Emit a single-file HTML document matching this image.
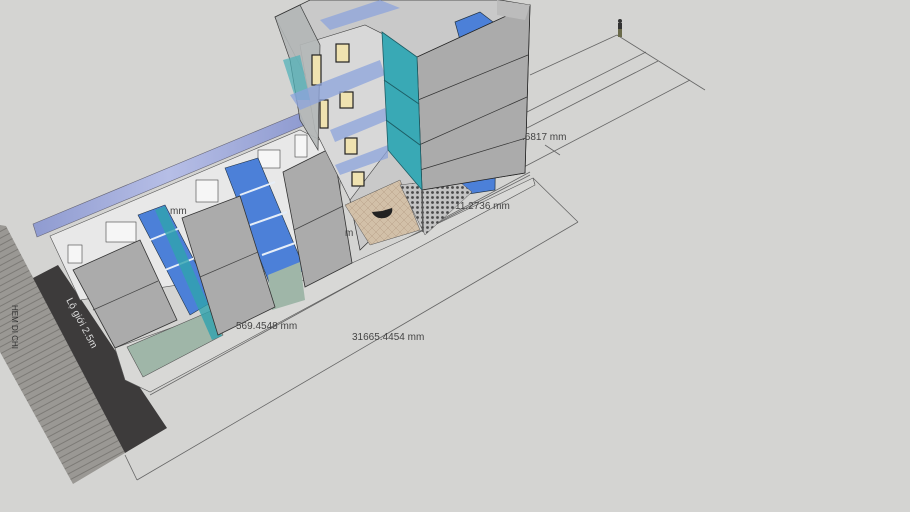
<!DOCTYPE html>
<html><head><meta charset="utf-8"><style>
html,body{margin:0;padding:0;width:910px;height:512px;overflow:hidden;background:#d4d4d2;}
svg{display:block}
text{font-family:"Liberation Sans",sans-serif;font-size:10px;fill:#444}
</style></head><body>
<svg width="910" height="512" viewBox="0 0 910 512" xmlns="http://www.w3.org/2000/svg">
<defs>
<pattern id="wood" width="6" height="6" patternUnits="userSpaceOnUse" patternTransform="rotate(62)">
<rect width="6" height="6" fill="#9a9894"/><line x1="0" y1="0" x2="0" y2="6" stroke="#7c7a76" stroke-width="2"/>
</pattern>
<pattern id="tile" width="8" height="8" patternUnits="userSpaceOnUse">
<rect width="8" height="8" fill="#d2c0a8"/><path d="M0 0L8 8M8 0L0 8" stroke="#b8a088" stroke-width="0.5"/>
</pattern>
<pattern id="dark" width="5" height="5" patternUnits="userSpaceOnUse">
<rect width="5" height="5" fill="#c4c4c4"/><circle cx="2.5" cy="2.5" r="1.4" fill="#4a4a4a"/>
</pattern>
<linearGradient id="sky" x1="0" y1="0" x2="1" y2="0">
<stop offset="0" stop-color="#8f9bd0"/><stop offset="0.5" stop-color="#b6bee6"/><stop offset="1" stop-color="#8f9bd0"/>
</linearGradient>
</defs>

<!-- ground lines -->
<g stroke="#666" stroke-width="0.8" fill="none">
<line x1="137" y1="480" x2="578" y2="222"/>
<line x1="578" y1="222" x2="533" y2="178"/>
<line x1="137" y1="480" x2="125" y2="455"/>
<line x1="150" y1="395" x2="535" y2="183"/>
<line x1="143" y1="380" x2="530" y2="172"/>
<line x1="530" y1="75" x2="617" y2="35"/>
<line x1="527" y1="112" x2="646" y2="52"/>
<line x1="527" y1="128" x2="658" y2="61"/>
<line x1="522" y1="168" x2="690" y2="80"/>
<line x1="617" y1="35" x2="705" y2="90"/>
<line x1="545" y1="145" x2="560" y2="155"/>
<line x1="420" y1="232" x2="530" y2="175"/>
</g>

<!-- wood strip -->
<polygon points="0,225 6,226 125,453 73,484 0,352" fill="url(#wood)"/>
<!-- road -->
<polygon points="33,278 58,265 167,428 125,453" fill="#3d3b3b"/>
<text transform="translate(66,300) rotate(62)" style="fill:#ddd;font-size:10px">Lộ giới 2.5m</text>
<text transform="translate(12,305) rotate(90)" style="fill:#333;font-size:8px">HEM DI CHI</text>

<!-- platform -->
<polygon points="115,348 352,263 420,232 533,178 535,185 150,392 125,380" fill="#d8d8d6" stroke="#555" stroke-width="0.6"/>

<!-- roof strip -->
<polygon points="33,224 300,113 305,125 37,237" fill="url(#sky)" stroke="#667" stroke-width="0.6"/>
<!-- back white walls low block -->
<polygon points="50,236 300,130 340,150 340,260 80,300" fill="#e8e8e8" stroke="#555" stroke-width="0.6"/>
<g fill="#f6f6f6" stroke="#444" stroke-width="0.6">
<rect x="106" y="222" width="30" height="20"/><rect x="196" y="180" width="22" height="22"/><rect x="258" y="150" width="22" height="18"/><rect x="295" y="135" width="12" height="22"/><rect x="68" y="245" width="14" height="18"/>
</g>
<!-- green lower -->
<polygon points="127,347 213,310 223,335 143,377" fill="#9fb6a8" stroke="#555" stroke-width="0.6"/>

<!-- blue stairs -->
<polygon points="138,215 165,205 215,300 190,315" fill="#4c80d8" stroke="#234" stroke-width="0.6"/>
<polygon points="225,168 258,158 305,270 270,285" fill="#4c80d8" stroke="#234" stroke-width="0.6"/>
<g stroke="#e6eef8" stroke-width="2">
<line x1="150" y1="240" x2="180" y2="228"/><line x1="165" y1="270" x2="195" y2="258"/>
<line x1="240" y1="195" x2="275" y2="182"/><line x1="250" y1="225" x2="287" y2="212"/><line x1="262" y1="255" x2="298" y2="242"/>
</g>
<polygon points="155,210 165,206 222,336 212,340" fill="#2fa3ae" opacity="0.8"/>
<polygon points="268,275 300,262 305,300 272,310" fill="#9fb6a8"/>

<!-- gray boxes low block -->
<g fill="#ababab" stroke="#333" stroke-width="0.8">
<polygon points="73,270 140,240 177,320 115,348"/>
<polygon points="182,218 240,196 275,307 218,335"/>
<polygon points="283,172 333,147 352,263 305,287"/>
</g>
<g stroke="#444" stroke-width="0.7">
<line x1="93" y1="310" x2="158" y2="281"/><line x1="200" y1="277" x2="258" y2="252"/><line x1="294" y1="230" x2="343" y2="206"/>
</g>

<!-- tall building back -->
<polygon points="275,17 310,0 500,0 530,5 525,173 422,190 360,250 340,150 318,100" fill="#c9c9c9" stroke="#333" stroke-width="0.7"/>
<!-- inner wall w windows -->
<polygon points="300,45 365,25 385,35 388,150 350,200 315,130" fill="#d8d8d8" stroke="#444" stroke-width="0.6"/>
<!-- tall left box -->
<polygon points="275,17 300,5 320,45 318,150 300,120 290,60" fill="#b3b7b7" stroke="#333" stroke-width="0.7" opacity="0.9"/>
<polygon points="283,60 300,55 310,100 296,100" fill="#4cb0b8" opacity="0.7"/>
<g fill="#efe2b0" stroke="#222" stroke-width="1.2">
<rect x="312" y="55" width="9" height="30"/><rect x="336" y="44" width="13" height="18"/>
<rect x="320" y="100" width="8" height="28"/><rect x="340" y="92" width="13" height="16"/>
<rect x="345" y="138" width="12" height="16"/><rect x="352" y="172" width="12" height="14"/>
</g>
<g fill="#8da4dc" opacity="0.75">
<polygon points="290,95 380,60 385,75 300,110"/>
<polygon points="330,130 385,108 388,120 335,142"/>
<polygon points="335,165 388,145 388,158 340,175"/>
<polygon points="320,20 380,0 400,8 330,30"/>
</g>
<!-- blue stair tower right -->
<polygon points="455,22 480,12 497,25 495,190 462,195 460,40" fill="#4c80d8" stroke="#234" stroke-width="0.7"/>
<g stroke="#e6eef8" stroke-width="2">
<line x1="462" y1="44" x2="492" y2="37"/><line x1="462" y1="85" x2="492" y2="78"/><line x1="462" y1="125" x2="492" y2="118"/><line x1="462" y1="160" x2="492" y2="154"/>
</g>
<!-- courtyard -->
<polygon points="345,205 400,180 420,230 370,245" fill="url(#tile)" stroke="#555" stroke-width="0.5"/>
<polygon points="400,185 455,178 472,192 425,235" fill="url(#dark)" stroke="#555" stroke-width="0.5"/>
<path d="M372 212 a10 8 0 1 0 20 -4 l-10 3z" fill="#222"/>
<!-- big right gray box -->
<polygon points="417,57 530,5 525,173 422,190" fill="#ababab" stroke="#222" stroke-width="0.8"/>
<polygon points="497,0 530,5 525,20 497,15" fill="#bcbcbc"/>
<g stroke="#333" stroke-width="0.7">
<line x1="418" y1="100" x2="528" y2="55"/><line x1="419" y1="145" x2="527" y2="97"/><line x1="420" y1="170" x2="526" y2="138"/>
</g>
<!-- teal panel -->
<polygon points="382,32 417,57 422,190 388,150" fill="#39a9b5" stroke="#1d5d65" stroke-width="0.8"/>
<line x1="384" y1="80" x2="419" y2="104" stroke="#1d5d65"/><line x1="386" y1="120" x2="420" y2="145" stroke="#1d5d65"/>
<line x1="422" y1="190" x2="423" y2="232" stroke="#555" stroke-width="1.5"/>

<!-- person -->
<rect x="618" y="23" width="4" height="6" fill="#333"/><circle cx="620" cy="21" r="2" fill="#333"/><rect x="618" y="29" width="4" height="8" fill="#6a6a4a"/>

<!-- dims -->
<text x="352" y="340">31665.4454 mm</text>
<text x="236" y="329">569.4548 mm</text>
<text x="455" y="209">11.2736 mm</text>
<text x="522" y="140">.6817 mm</text>
<text x="170" y="214">mm</text>
<text x="345" y="236">m</text>
</svg>
</body></html>
